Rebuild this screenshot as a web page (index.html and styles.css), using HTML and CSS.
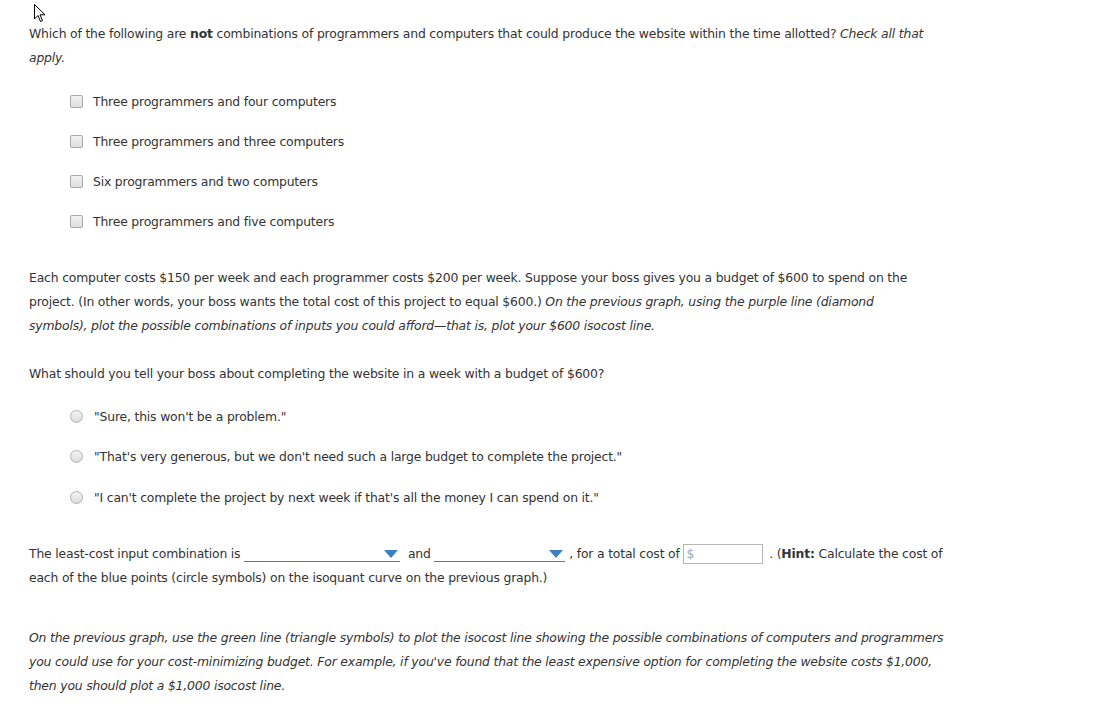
FILE: index.html
```html
<!DOCTYPE html>
<html>
<head>
<meta charset="utf-8">
<link rel="stylesheet" href="styles.css">
</head>
<body>
<svg class="cursor" width="14" height="20" viewBox="0 0 14 20"><path d="M1.5 1.5 L1.5 16 L5 12.5 L7.5 18.5 L9.5 17.6 L7 11.8 L12 11.8 Z" fill="#fff" stroke="#000" stroke-width="1" stroke-linejoin="miter"/></svg>
<div class="page">
  <p class="text first">Which of the following are <b>not</b> combinations of programmers and computers that could produce the website within the time allotted? <i>Check all that apply.</i></p>
  <ul class="options">
    <li><span class="check"></span>Three programmers and four computers</li>
    <li><span class="check"></span>Three programmers and three computers</li>
    <li><span class="check"></span>Six programmers and two computers</li>
    <li><span class="check"></span>Three programmers and five computers</li>
  </ul>
  <p class="text gap25">Each computer costs $150 per week and each programmer costs $200 per week. Suppose your boss gives you a budget of $600 to spend on the project. (In other words, your boss wants the total cost of this project to equal $600.) <i>On the previous graph, using the purple line (diamond<br>symbols), plot the possible combinations of inputs you could afford—that is, plot your $600 isocost line.</i></p>
  <p class="text gap24">What should you tell your boss about completing the website in a week with a budget of $600?</p>
  <ul class="options radios">
    <li><span class="radio"></span>"Sure, this won't be a problem."</li>
    <li><span class="radio"></span>"That's very generous, but we don't need such a large budget to complete the project."</li>
    <li><span class="radio"></span>"I can't complete the project by next week if that's all the money I can spend on it."</li>
  </ul>
  <p class="text gap24">The least-cost input combination is <span class="select sel1"><span class="arrow"></span></span> and <span class="select sel2"><span class="arrow"></span></span> , for a total cost of <span class="money">$</span> . (<b>Hint:</b> Calculate the cost of each of the blue points (circle symbols) on the isoquant curve on the previous graph.)</p>
  <p class="text gap36"><i>On the previous graph, use the green line (triangle symbols) to plot the isocost line showing the possible combinations of computers and programmers you could use for your cost-minimizing budget. For example, if you've found that the least expensive option for completing the website costs $1,000, then you should plot a $1,000 isocost line.</i></p>
</div>
</body>
</html>
```
FILE: styles.css
```css
html, body {
  margin: 0;
  padding: 0;
  background: #fff;
}
body {
  font-family: "DejaVu Sans", Verdana, sans-serif;
  font-size: 12.4px;
  letter-spacing: -0.18px;
  color: #333;
  position: relative;
}
.cursor {
  position: absolute;
  left: 33px;
  top: 3px;
}
.page {
  padding: 0 150px 0 29px;
  width: 920px;
}
.text {
  margin: 0;
  line-height: 24px;
}
.first {
  padding-top: 22px;
}
.gap24 { margin-top: 24px; }
.gap25 { margin-top: 25px; }
.gap36 { margin-top: 36px; }
.options {
  list-style: none;
  margin: 11px 0 0 0;
  padding: 0 0 0 41px;
}
.options li {
  height: 40px;
  display: flex;
  align-items: center;
}
.radios {
  margin-top: 10px;
}
.radios li {
  height: 40.5px;
}
.check {
  display: inline-block;
  width: 11px;
  height: 11px;
  border: 1px solid #a9a9a9;
  border-radius: 2px;
  background: linear-gradient(#f2f2f2, #dedede);
  margin-right: 10px;
  flex: none;
}
.radio {
  display: inline-block;
  width: 11px;
  height: 11px;
  border: 1px solid #b0b0b0;
  border-radius: 50%;
  background: linear-gradient(#f4f4f4, #dcdcdc);
  margin-right: 11px;
  flex: none;
}
.select {
  display: inline-block;
  position: relative;
  height: 14px;
  border-bottom: 1px solid #3b7fc4;
  vertical-align: middle;
}
.sel1 { width: 156px; margin-right: 4px; }
.sel2 { width: 131px; }
.arrow {
  position: absolute;
  right: 2px;
  top: 3px;
  width: 0;
  height: 0;
  border-left: 7px solid transparent;
  border-right: 7px solid transparent;
  border-top: 8px solid #3b7fc4;
}
.money {
  display: inline-block;
  width: 76px;
  height: 18px;
  line-height: 18px;
  border: 1px solid #b5b5b5;
  padding-left: 2px;
  color: #9aaabb;
  vertical-align: middle;
  box-sizing: content-box;
  margin-right: 2px;
}
```
